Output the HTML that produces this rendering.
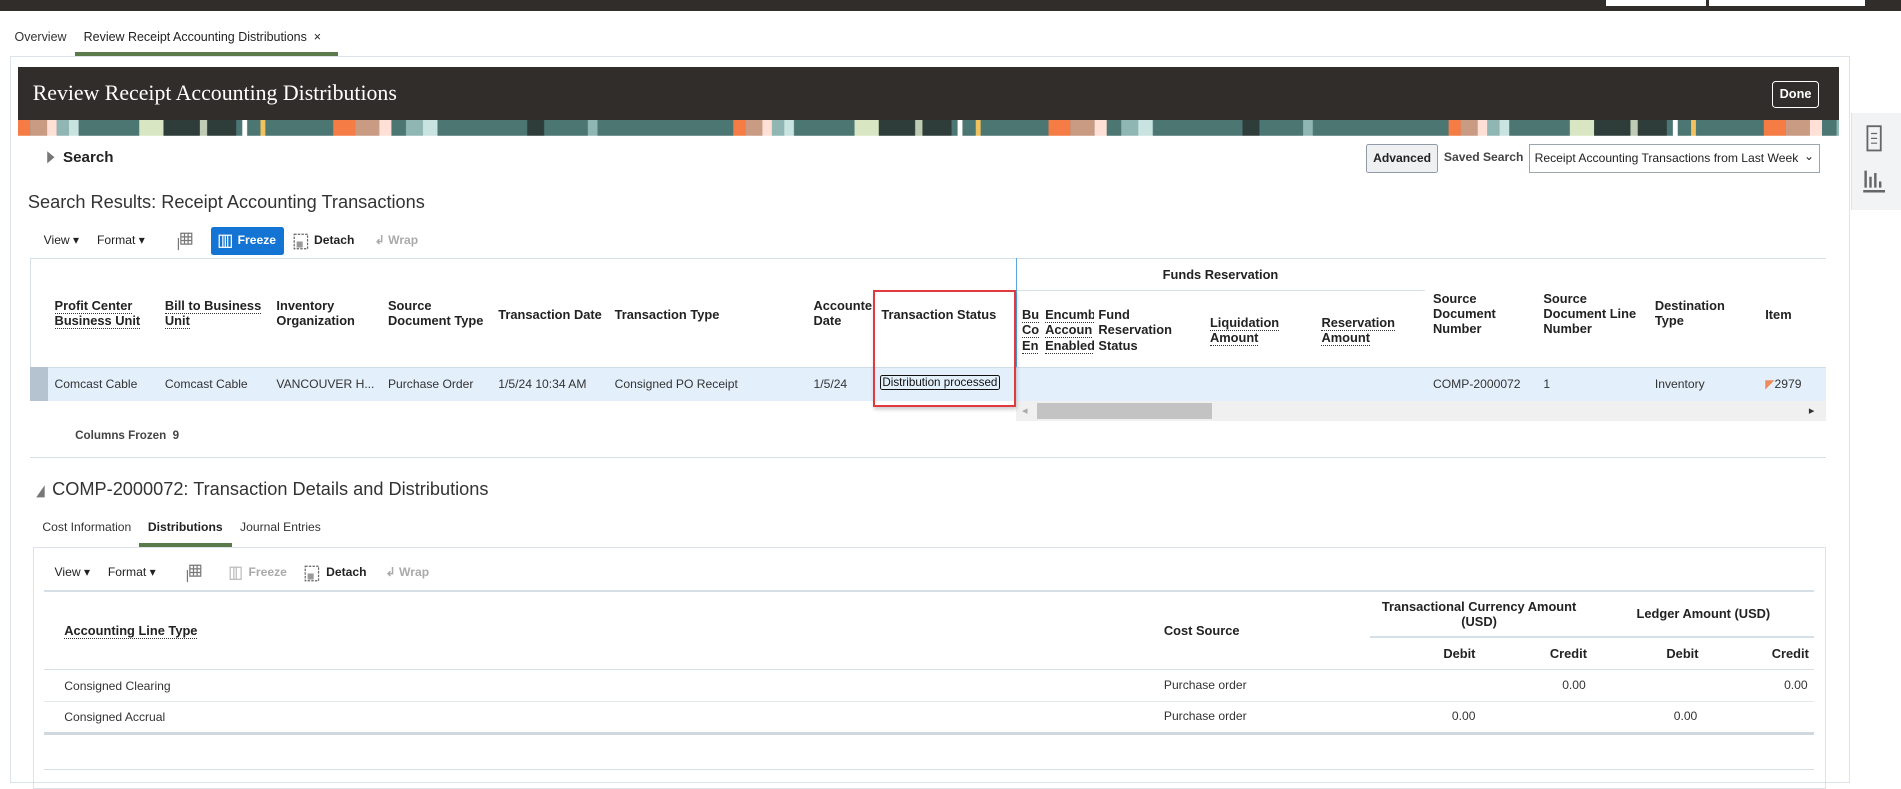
<!DOCTYPE html>
<html><head><meta charset="utf-8">
<style>
html{zoom:1.21237}
body{margin:0;width:1568px;height:637px;position:relative;overflow:hidden;background:#fff;font-family:"Liberation Sans",Arial,sans-serif;color:#333;font-size:11px}
.a{position:absolute;white-space:nowrap}
.b{font-weight:bold;color:#222}
.u{border-bottom:1px dotted #333}
.h{position:absolute;font-weight:bold;color:#222;font-size:10.6px;line-height:12.5px}
.hl{position:absolute;height:1px;background:#d6dfe6}
.vl{position:absolute;width:1px;background:#d6dfe6}
.c{position:absolute;font-size:10px;color:#333;white-space:nowrap}
</style></head><body>
<div class="a" style="left:0;top:0;width:1568px;height:9px;background:#312d2a"></div>
<div class="a" style="left:1325px;top:0;width:82px;height:5px;background:#fff"></div>
<div class="a" style="left:1410px;top:0;width:128px;height:5px;background:#fff"></div>

<div class="a" style="left:12px;top:25px;font-size:10.3px">Overview</div>
<div class="a" style="left:69px;top:25px;font-size:10.3px;color:#222">Review Receipt Accounting Distributions &nbsp;×</div>
<div class="a" style="left:62px;top:43px;width:217px;height:3px;background:#5b7a4a"></div>

<div class="a" style="left:8px;top:46px;width:1518px;height:600px;border:1px solid #dde3e8;box-sizing:border-box"></div>

<div class="a" style="left:15px;top:55px;width:1502px;height:45px;background:#312d2a"></div>
<svg class="a" style="left:15px;top:99px" width="1502" height="13">
<defs><pattern id="p" width="590" height="13" patternUnits="userSpaceOnUse">
<rect width="590" height="13" fill="#4c7672"/>
<rect x="0" width="10" height="13" fill="#f57c44"/><rect x="10" width="14" height="13" fill="#c99b82"/><rect x="24" width="8" height="13" fill="#ffe0d6"/><rect x="32" width="10" height="13" fill="#8fb6b3"/><rect x="42" width="8" height="13" fill="#c9e3e1"/>
<rect x="100" width="20" height="13" fill="#d9e6c3"/><rect x="120" width="60" height="13" fill="#2f3d3a"/><rect x="150" width="6" height="13" fill="#bfcbb5"/><rect x="185" width="4" height="13" fill="#fff"/><rect x="200" width="4" height="13" fill="#f2c25e"/>
<rect x="260" width="18" height="13" fill="#f57c44"/><rect x="278" width="20" height="13" fill="#c99b82"/><rect x="298" width="10" height="13" fill="#ffe0d6"/><rect x="320" width="14" height="13" fill="#8fb6b3"/><rect x="334" width="12" height="13" fill="#c9e3e1"/><rect x="420" width="14" height="13" fill="#2f3d3a"/><rect x="470" width="8" height="13" fill="#8fb6b3"/>
</pattern></defs><rect width="1502" height="13" fill="url(#p)"/></svg>
<div class="a" style="left:27px;top:67px;font-family:'Liberation Serif',serif;font-size:18px;color:#fff">Review Receipt Accounting Distributions</div>
<div class="a" style="left:1462px;top:67px;width:38px;height:22px;border:1px solid #fff;border-radius:3px;box-sizing:border-box;color:#fff;font-weight:bold;font-size:10.5px;text-align:center;line-height:20px">Done</div>

<div class="a" style="left:1527px;top:93px;width:41px;height:80px;background:#f2f3f4;border-left:1px solid #dde3e8"></div>
<svg class="a" style="left:1538px;top:103px" width="16" height="24"><rect x="2" y="1" width="11" height="20" fill="none" stroke="#666" stroke-width="1.5"/><path d="M5 7h5M5 11h5M5 15h5" stroke="#666"/></svg>
<svg class="a" style="left:1536px;top:138px" width="20" height="22"><path d="M3 3v14M7 8v9M11 5v12M15 12v5M1 20h18" stroke="#666" stroke-width="2"/></svg>

<svg class="a" style="left:38px;top:124px" width="8" height="12"><path d="M1 1l6 5-6 5z" fill="#777"/></svg>
<div class="a b" style="left:52px;top:123px;font-size:12.5px">Search</div>
<div class="a" style="left:1127px;top:119px;width:59px;height:24px;border:1px solid #8f9ba6;border-radius:2px;background:#eef0f2;box-sizing:border-box;text-align:center;line-height:22px;font-weight:bold;font-size:10px;color:#222">Advanced</div>
<div class="a" style="left:1191px;top:124px;font-size:10px;color:#444;font-weight:bold">Saved Search</div>
<div class="a" style="left:1261px;top:119px;width:240px;height:24px;border:1px solid #9aa6b0;box-sizing:border-box;font-size:10px;line-height:22px;padding-left:4px;color:#222">Receipt Accounting Transactions from Last Week</div>
<div class="a" style="left:1488px;top:123px;font-size:10px;color:#222">⌄</div>

<div class="a" style="left:23px;top:158px;font-size:15px;color:#333">Search Results: Receipt Accounting Transactions</div>

<div class="a" style="left:36px;top:192px;font-size:10px;color:#222">View ▾</div>
<div class="a" style="left:80px;top:192px;font-size:10px;color:#222">Format ▾</div>
<svg class="a" style="left:145px;top:191px" width="14" height="16"><path d="M4 1h9v9H4zM4 4h9M4 7h9M7 1v9M10 1v9M2 5v10" stroke="#777" fill="none"/></svg>
<div class="a" style="left:174px;top:187px;width:60px;height:23px;background:#1474d4;border-radius:2px;color:#fff;font-weight:bold;font-size:10px;line-height:23px;padding-left:22px;box-sizing:border-box">Freeze</div>
<svg class="a" style="left:180px;top:193px" width="12" height="12"><rect x="1" y="1" width="10" height="10" fill="none" stroke="#fff"/><path d="M4 1v10M6 1v10M8 1v10" stroke="#fff"/></svg>
<svg class="a" style="left:242px;top:192px" width="13" height="14"><rect x="1" y="1" width="11" height="12" fill="none" stroke="#666" stroke-dasharray="2 1"/><rect x="3" y="7" width="5" height="5" fill="#999"/></svg>
<div class="a b" style="left:259px;top:192px;font-size:10px">Detach</div>
<div class="a" style="left:309px;top:192px;font-size:10px;color:#aaa;font-weight:bold">↲ Wrap</div>

<div class="hl" style="left:25px;top:213px;width:1481px"></div>
<div class="a" style="left:25px;top:214px;width:15px;height:116px;border-left:1px solid #d6dfe6"></div>
<div class="a" style="left:838px;top:213px;width:1px;height:90px;background:#5aa6e0"></div>
<div class="h" style="left:959px;top:220px">Funds Reservation</div>
<div class="hl" style="left:839px;top:239px;width:336px"></div>

<div class="h" style="left:45px;top:246px"><span class="u">Profit Center</span><br><span class="u">Business Unit</span></div>
<div class="h" style="left:136px;top:246px"><span class="u">Bill to Business</span><br><span class="u">Unit</span></div>
<div class="h" style="left:228px;top:246px">Inventory<br>Organization</div>
<div class="h" style="left:320px;top:246px">Source<br>Document Type</div>
<div class="h" style="left:411px;top:253px">Transaction Date</div>
<div class="h" style="left:507px;top:253px">Transaction Type</div>
<div class="h" style="left:671px;top:246px">Accounte<br>Date</div>
<div class="h" style="left:727px;top:253px">Transaction Status</div>
<div class="h" style="left:843px;top:253px;line-height:13px"><span class="u">Bu</span><br><span class="u">Co</span><br><span class="u">En</span></div>
<div class="h" style="left:862px;top:253px;line-height:13px;width:40px;overflow:hidden"><span class="u">Encumb</span><br><span class="u">Accoun</span><br><span class="u">Enabled</span></div>
<div class="h" style="left:906px;top:253px;line-height:13px">Fund<br>Reservation<br>Status</div>
<div class="h" style="left:998px;top:260px"><span class="u">Liquidation</span><br><span class="u">Amount</span></div>
<div class="h" style="left:1090px;top:260px"><span class="u">Reservation</span><br><span class="u">Amount</span></div>
<div class="h" style="left:1182px;top:240px">Source<br>Document<br>Number</div>
<div class="h" style="left:1273px;top:240px">Source<br>Document Line<br>Number</div>
<div class="h" style="left:1365px;top:246px">Destination<br>Type</div>
<div class="h" style="left:1456px;top:253px">Item</div>

<div class="a" style="left:25px;top:303px;width:1481px;height:27px;background:#e3effb;border-top:1px solid #cfdde8"></div>
<div class="a" style="left:25px;top:303px;width:15px;height:28px;background:#b4c3cf"></div>
<div class="c" style="left:45px;top:311px">Comcast Cable</div>
<div class="c" style="left:136px;top:311px">Comcast Cable</div>
<div class="c" style="left:228px;top:311px">VANCOUVER H...</div>
<div class="c" style="left:320px;top:311px">Purchase Order</div>
<div class="c" style="left:411px;top:311px">1/5/24 10:34 AM</div>
<div class="c" style="left:507px;top:311px">Consigned PO Receipt</div>
<div class="c" style="left:671px;top:311px">1/5/24</div>
<div class="c" style="left:726px;top:309px;border:1.5px solid #111;border-radius:2px;padding:0 1px;color:#111;font-size:9.6px">Distribution processed</div>
<div class="c" style="left:1182px;top:311px">COMP-2000072</div>
<div class="c" style="left:1273px;top:311px">1</div>
<div class="c" style="left:1365px;top:311px">Inventory</div>
<div class="c" style="left:1456px;top:311px"><span style="color:#f08a5a">◤</span>2979</div>

<div class="a" style="left:838px;top:331px;width:668px;height:16px;background:#f0f0f0"></div>
<div class="a" style="left:855px;top:332px;width:145px;height:14px;background:#c3c3c3"></div>
<div class="a" style="left:843px;top:333px;font-size:9px;color:#aaa">◂</div>
<div class="a" style="left:1492px;top:333px;font-size:9px;color:#333">▸</div>

<div class="a" style="left:720px;top:239px;width:118px;height:97px;border:2px solid #e0393e;box-sizing:border-box;box-shadow:1px 2px 3px rgba(0,0,0,.2)"></div>

<div class="a b" style="left:62px;top:354px;font-size:9.6px;color:#444">Columns Frozen &nbsp;9</div>
<div class="hl" style="left:25px;top:377px;width:1481px"></div>

<svg class="a" style="left:29px;top:399px" width="10" height="12"><path d="M8 1v10H1z" fill="#777"/></svg>
<div class="a" style="left:43px;top:395px;font-size:15px;color:#333">COMP-2000072: Transaction Details and Distributions</div>

<div class="a" style="left:35px;top:429px;font-size:10px;color:#333">Cost Information</div>
<div class="a b" style="left:122px;top:429px;font-size:10px">Distributions</div>
<div class="a" style="left:198px;top:429px;font-size:10px;color:#333">Journal Entries</div>
<div class="a" style="left:115px;top:448px;width:76px;height:3px;background:#5b7a4a"></div>
<div class="a" style="left:27px;top:451px;width:1479px;height:200px;border:1px solid #dde3e8;box-sizing:border-box"></div>

<div class="a" style="left:45px;top:466px;font-size:10px;color:#222">View ▾</div>
<div class="a" style="left:89px;top:466px;font-size:10px;color:#222">Format ▾</div>
<svg class="a" style="left:153px;top:465px" width="14" height="16"><path d="M4 1h9v9H4zM4 4h9M4 7h9M7 1v9M10 1v9M2 5v10" stroke="#777" fill="none"/></svg>
<svg class="a" style="left:189px;top:467px" width="11" height="12"><rect x="1" y="1" width="9" height="10" fill="none" stroke="#bbb"/><path d="M4 1v10M6 1v10" stroke="#bbb"/></svg>
<div class="a" style="left:205px;top:466px;font-size:10px;color:#aaa;font-weight:bold">Freeze</div>
<svg class="a" style="left:251px;top:466px" width="13" height="14"><rect x="1" y="1" width="11" height="12" fill="none" stroke="#666" stroke-dasharray="2 1"/><rect x="3" y="7" width="5" height="5" fill="#999"/></svg>
<div class="a b" style="left:269px;top:466px;font-size:10px">Detach</div>
<div class="a" style="left:318px;top:466px;font-size:10px;color:#aaa;font-weight:bold">↲ Wrap</div>

<div class="hl" style="left:36px;top:487px;width:1460px"></div>
<div class="h" style="left:53px;top:514px"><span class="u">Accounting Line Type</span></div>
<div class="h" style="left:960px;top:514px">Cost Source</div>
<div class="h" style="left:1130px;top:494px;width:180px;text-align:center">Transactional Currency Amount<br>(USD)</div>
<div class="h" style="left:1314px;top:500px;width:182px;text-align:center">Ledger Amount (USD)</div>
<div class="hl" style="left:1130px;top:525px;width:366px"></div>
<div class="h" style="left:1160px;top:533px;width:57px;text-align:right">Debit</div>
<div class="h" style="left:1250px;top:533px;width:59px;text-align:right">Credit</div>
<div class="h" style="left:1340px;top:533px;width:61px;text-align:right">Debit</div>
<div class="h" style="left:1430px;top:533px;width:62px;text-align:right">Credit</div>
<div class="hl" style="left:36px;top:552px;width:1460px"></div>
<div class="c" style="left:53px;top:560px">Consigned Clearing</div>
<div class="c" style="left:960px;top:559px">Purchase order</div>
<div class="c" style="left:1250px;top:559px;width:58px;text-align:right">0.00</div>
<div class="c" style="left:1430px;top:559px;width:61px;text-align:right">0.00</div>
<div class="hl" style="left:36px;top:578px;width:1460px;background:#e4e9ed"></div>
<div class="c" style="left:53px;top:586px">Consigned Accrual</div>
<div class="c" style="left:960px;top:585px">Purchase order</div>
<div class="c" style="left:1160px;top:585px;width:57px;text-align:right">0.00</div>
<div class="c" style="left:1340px;top:585px;width:60px;text-align:right">0.00</div>
<div class="a" style="left:36px;top:604px;width:1460px;height:2px;background:#d0d8de"></div>
<div class="hl" style="left:36px;top:634px;width:1460px"></div>
</body></html>
